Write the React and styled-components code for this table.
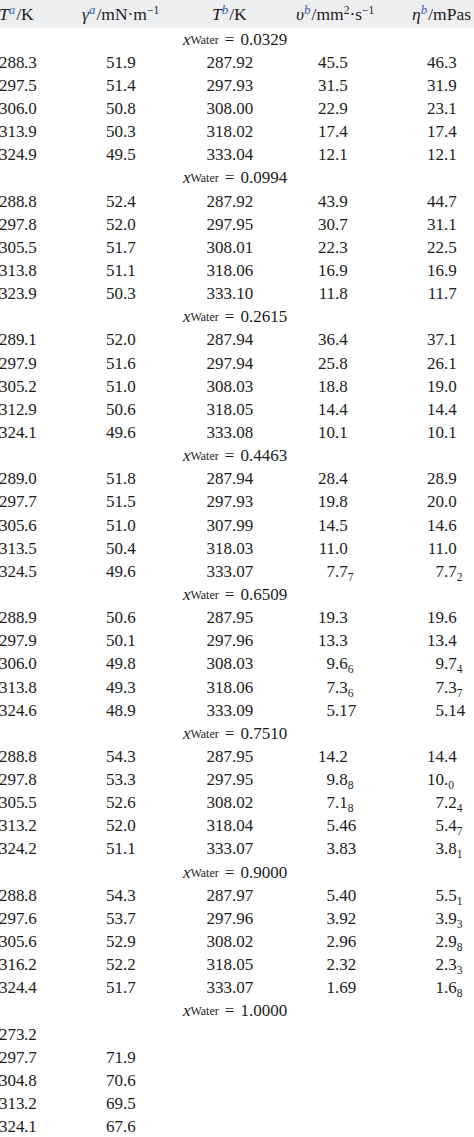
import React from "react";
import styled, { createGlobalStyle } from "styled-components";

const GlobalStyle = createGlobalStyle`
  html, body {
    margin: 0;
    padding: 0;
    background: #fff;
  }
  body {
    font-family: "Liberation Serif", "Times New Roman", serif;
    color: #1c1c1c;
    overflow: hidden;
  }
`;

const groups = [
  {
    x: "0.0329",
    rows: [
      ["288.3", "51.9", "287.92", "45.5", "46.3"],
      ["297.5", "51.4", "297.93", "31.5", "31.9"],
      ["306.0", "50.8", "308.00", "22.9", "23.1"],
      ["313.9", "50.3", "318.02", "17.4", "17.4"],
      ["324.9", "49.5", "333.04", "12.1", "12.1"],
    ],
  },
  {
    x: "0.0994",
    rows: [
      ["288.8", "52.4", "287.92", "43.9", "44.7"],
      ["297.8", "52.0", "297.95", "30.7", "31.1"],
      ["305.5", "51.7", "308.01", "22.3", "22.5"],
      ["313.8", "51.1", "318.06", "16.9", "16.9"],
      ["323.9", "50.3", "333.10", "11.8", "11.7"],
    ],
  },
  {
    x: "0.2615",
    rows: [
      ["289.1", "52.0", "287.94", "36.4", "37.1"],
      ["297.9", "51.6", "297.94", "25.8", "26.1"],
      ["305.2", "51.0", "308.03", "18.8", "19.0"],
      ["312.9", "50.6", "318.05", "14.4", "14.4"],
      ["324.1", "49.6", "333.08", "10.1", "10.1"],
    ],
  },
  {
    x: "0.4463",
    rows: [
      ["289.0", "51.8", "287.94", "28.4", "28.9"],
      ["297.7", "51.5", "297.93", "19.8", "20.0"],
      ["305.6", "51.0", "307.99", "14.5", "14.6"],
      ["313.5", "50.4", "318.03", "11.0", "11.0"],
      ["324.5", "49.6", "333.07", "7.7_7", "7.7_2"],
    ],
  },
  {
    x: "0.6509",
    rows: [
      ["288.9", "50.6", "287.95", "19.3", "19.6"],
      ["297.9", "50.1", "297.96", "13.3", "13.4"],
      ["306.0", "49.8", "308.03", "9.6_6", "9.7_4"],
      ["313.8", "49.3", "318.06", "7.3_6", "7.3_7"],
      ["324.6", "48.9", "333.09", "5.17", "5.14"],
    ],
  },
  {
    x: "0.7510",
    rows: [
      ["288.8", "54.3", "287.95", "14.2", "14.4"],
      ["297.8", "53.3", "297.95", "9.8_8", "10._0"],
      ["305.5", "52.6", "308.02", "7.1_8", "7.2_4"],
      ["313.2", "52.0", "318.04", "5.46", "5.4_7"],
      ["324.2", "51.1", "333.07", "3.83", "3.8_1"],
    ],
  },
  {
    x: "0.9000",
    rows: [
      ["288.8", "54.3", "287.97", "5.40", "5.5_1"],
      ["297.6", "53.7", "297.96", "3.92", "3.9_3"],
      ["305.6", "52.9", "308.02", "2.96", "2.9_8"],
      ["316.2", "52.2", "318.05", "2.32", "2.3_3"],
      ["324.4", "51.7", "333.07", "1.69", "1.6_8"],
    ],
  },
  {
    x: "1.0000",
    rows: [
      ["273.2", "", "", "", ""],
      ["297.7", "71.9", "", "", ""],
      ["304.8", "70.6", "", "", ""],
      ["313.2", "69.5", "", "", ""],
      ["324.1", "67.6", "", "", ""],
    ],
  },
];

// width of the part before the decimal point, per column, so the points line up
const intWidths = [25, 44, 53, 46, 45];

const Page = styled.div`
  width: 474px;
  overflow: hidden;
`;

const Table = styled.div`
  width: 490px;
  margin-left: -1px;
  font-size: 17px;
`;

const HeadRow = styled.div`
  display: grid;
  grid-template-columns: 80px 100px 110px 110px 90px;
  height: 28px;
  align-items: center;
  background: #eeeff1;
  white-space: nowrap;
  font-size: 17.5px;
`;

const HeadCell = styled.div`
  padding-left: ${(p) => p.$indent}px;
`;

const Italic = styled.i`
  font-style: italic;
`;

const Mark = styled.sup`
  font-style: italic;
  color: #3b5fc9;
  font-size: 13px;
  vertical-align: 6px;
  line-height: 0;
  margin-right: 1px;
`;

const Power = styled.sup`
  font-size: 11.5px;
  vertical-align: 6px;
  line-height: 0;
`;

const GroupRow = styled.div`
  height: 23.15px;
  display: flex;
  align-items: center;
  justify-content: center;
  padding-right: 18px;
  white-space: nowrap;
`;

const Sub = styled.sub`
  font-size: 12px;
  vertical-align: -4px;
  line-height: 0;
`;

const Equals = styled.span`
  margin: 0 6px;
`;

const DataRow = styled.div`
  display: grid;
  grid-template-columns: 80px 100px 110px 110px 90px;
  height: 23.15px;
  align-items: center;
`;

const NumCell = styled.div`
  display: flex;
  white-space: nowrap;
`;

const IntPart = styled.span`
  width: ${(p) => p.$w}px;
  text-align: right;
  flex: none;
`;

const Digit = styled.sub`
  font-size: 11.5px;
  vertical-align: -4px;
  line-height: 0;
`;

function Num({ value, intWidth }) {
  if (!value) return <NumCell />;
  const [main, sub] = value.split("_");
  const dot = main.indexOf(".");
  const intPart = dot >= 0 ? main.slice(0, dot) : main;
  const frac = dot >= 0 ? main.slice(dot) : "";
  return (
    <NumCell>
      <IntPart $w={intWidth}>{intPart}</IntPart>
      <span>
        {frac}
        {sub && <Digit>{sub}</Digit>}
      </span>
    </NumCell>
  );
}

export default function App() {
  return (
    <Page>
      <GlobalStyle />
      <Table>
        <HeadRow>
          <HeadCell $indent={0}>
            <Italic>T</Italic>
            <Mark>a</Mark>/K
          </HeadCell>
          <HeadCell $indent={3}>
            <Italic>γ</Italic>
            <Mark>a</Mark>/mN·m<Power>−1</Power>
          </HeadCell>
          <HeadCell $indent={33}>
            <Italic>T</Italic>
            <Mark>b</Mark>/K
          </HeadCell>
          <HeadCell $indent={7}>
            <Italic>υ</Italic>
            <Mark>b</Mark>/mm<Power>2</Power>·s<Power>−1</Power>
          </HeadCell>
          <HeadCell $indent={13}>
            <Italic>η</Italic>
            <Mark>b</Mark>/mPas
          </HeadCell>
        </HeadRow>
        {groups.map((g) => (
          <React.Fragment key={g.x}>
            <GroupRow>
              <Italic>x</Italic>
              <Sub>Water</Sub>
              <Equals>=</Equals>
              {g.x}
            </GroupRow>
            {g.rows.map((r, i) => (
              <DataRow key={i}>
                {r.map((v, j) => (
                  <Num key={j} value={v} intWidth={intWidths[j]} />
                ))}
              </DataRow>
            ))}
          </React.Fragment>
        ))}
      </Table>
    </Page>
  );
}
